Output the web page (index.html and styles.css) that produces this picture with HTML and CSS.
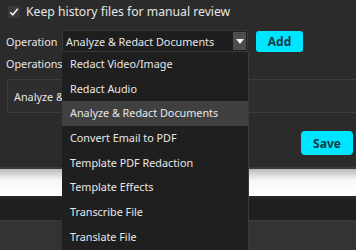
FILE: index.html
```html
<!DOCTYPE html>
<html>
<head>
<meta charset="utf-8">
<link rel="stylesheet" href="styles.css">
</head>
<body>
<div class="window">
  <div class="check-row">
    <span class="checkbox">
      <svg width="12" height="12" viewBox="0 0 12 12"><path d="M2.3 6.2 L4.8 8.8 L9.8 2.8" fill="none" stroke="#f0f0f0" stroke-width="1.6"/></svg>
    </span>
    <span class="check-label">Keep history files for manual review</span>
  </div>
  <div class="op-row">
    <span class="label">Operation</span>
    <div class="select">
      <span class="select-text">Analyze &amp; Redact Documents</span>
      <span class="arrow"><svg width="8" height="5" viewBox="0 0 8 5"><path d="M0 0 H8 L4 5 Z" fill="#f2f2f2"/></svg></span>
    </div>
    <button class="btn add">Add</button>
  </div>
  <div class="ops-label label">Operations</div>
  <div class="listbox"><span class="list-item">Analyze &amp; Redact Documents</span></div>
  <div class="save-row"><button class="btn save">Save</button></div>
  <div class="bottom">
    <div class="white-bar"></div>
    <div class="dark-band"></div>
    <div class="gray-area"></div>
  </div>
  <ul class="menu">
    <li>Redact Video/Image</li>
    <li>Redact Audio</li>
    <li class="active">Analyze &amp; Redact Documents</li>
    <li>Convert Email to PDF</li>
    <li>Template PDF Redaction</li>
    <li>Template Effects</li>
    <li>Transcribe File</li>
    <li>Translate File</li>
  </ul>
</div>
</body>
</html>
```
FILE: styles.css
```css
* { box-sizing: border-box; }
html, body { margin: 0; padding: 0; }
body {
  width: 356px;
  height: 250px;
  overflow: hidden;
  background: #2b2b2b;
  font-family: "Noto Sans", "Open Sans", sans-serif;
  font-size: 10.8px;
  color: #e6e6e6;
}
.window { position: relative; width: 356px; height: 250px; display: flex; flex-direction: column; }
.check-row { display: flex; align-items: center; height: 14px; margin-top: 5px; padding-left: 8px; gap: 6px; }
.checkbox { width: 12px; height: 12px; background: #3a3a3a; display: flex; }
.check-label { line-height: 14px; font-size: 12.2px; }
.op-row { display: flex; align-items: center; margin-top: 11px; height: 22px; padding-left: 6px; }
.label { color: #e6e6e6; }
.op-row .label { width: 56px; }
.select {
  width: 186px; height: 22px; background: #1e1e1e; border: 1px solid #3a3a3a;
  display: flex; align-items: center; justify-content: space-between; padding-left: 3px; padding-right: 1px;
}
.arrow { width: 13px; height: 18px; background: #4d4d4d; display: flex; align-items: center; justify-content: center; }
.btn {
  font-family: "Noto Sans", "Open Sans", sans-serif; font-weight: 700; font-size: 12px;
  background: #00e5ff; color: #0d3a44; border: none; border-radius: 3px; padding: 0;
}
.add { width: 47px; height: 21px; margin-left: 8px; }
.ops-label { margin-top: 4px; padding-left: 6px; line-height: 16px; }
.listbox {
  margin-top: 7px; margin-left: 7px; height: 34px; border: 1px solid #3d3d3d; background: #2e2e2e;
  display: flex; align-items: center; padding-left: 6px; width: 360px;
}
.save-row { display: flex; justify-content: flex-end; padding-right: 3px; margin-top: 18px; }
.save { width: 52px; height: 24px; border-radius: 4px; }
.bottom { margin-top: 12px; display: flex; flex-direction: column; flex: 1; }
.white-bar { height: 29px; border-top: 2px solid #3a3a3a; background: linear-gradient(#b8b8b8, #f6f6f6 40%, #ffffff); }
.dark-band { height: 24px; background: #1f1f1f; border-top: 3px solid #262626; }
.gray-area { flex: 1; background: #333333; border-top: 1px solid #3a3a3a; }
.menu {
  position: absolute; left: 62px; top: 52px; width: 187px; margin: 0; padding: 0; list-style: none;
  background: #1f1f1f; border-right: 1px solid #3a3a3a;
}
.menu li { height: 24.7px; line-height: 24.7px; padding-left: 8px; color: #e8e8e8; white-space: nowrap; }
.menu li.active { background: #404040; }
```
